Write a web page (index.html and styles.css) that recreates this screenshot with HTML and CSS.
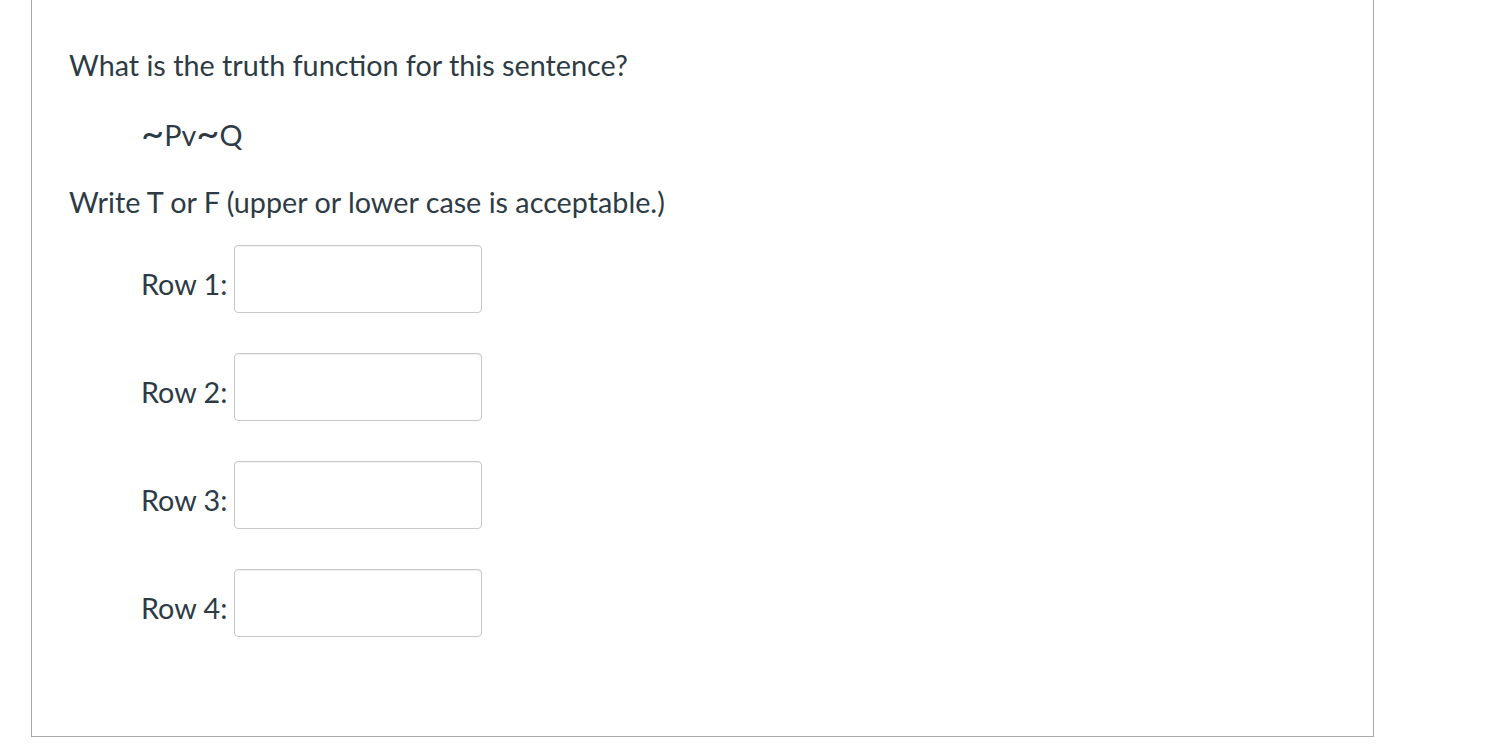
FILE: index.html
```html
<!DOCTYPE html>
<html lang="en">
<head>
<meta charset="utf-8">
<title>Question</title>
<link rel="stylesheet" href="styles.css">
</head>
<body>
<div class="question">
  <p class="prompt">What is the truth function for this sentence?</p>
  <p class="expr"><span class="tilde">~</span>Pv<span class="tilde">~</span>Q</p>
  <p class="prompt instr">Write T or F (upper or lower case is acceptable.)</p>
  <div class="rows">
    <div class="row"><span class="label">Row 1:</span><input class="answer" type="text"></div>
    <div class="row"><span class="label">Row 2:</span><input class="answer" type="text"></div>
    <div class="row"><span class="label">Row 3:</span><input class="answer" type="text"></div>
    <div class="row"><span class="label">Row 4:</span><input class="answer" type="text"></div>
  </div>
</div>
</body>
</html>
```
FILE: styles.css
```css
html, body {
  margin: 0;
  padding: 0;
  background: #ffffff;
}
body {
  font-family: Lato, "Liberation Sans", sans-serif;
  color: #2d3b45;
}
.question {
  margin-left: 31px;
  width: 1343px;
  height: 737px;
  box-sizing: border-box;
  border: 1px solid #a8a8a8;
  border-top: none;
  padding: 45px 0 0 37px;
}
p {
  margin: 0;
  font-size: 28.75px;
  line-height: 40px;
}
.expr {
  margin-top: 30px;
  padding-left: 72px;
}
.tilde {
  font-size: 40px;
  line-height: 0;
  vertical-align: -1px;
}
.instr {
  margin-top: 27px;
}
.rows {
  margin-top: 23px;
  padding-left: 72px;
  display: flex;
  flex-direction: column;
  gap: 40px;
}
.row {
  display: flex;
  align-items: center;
  height: 68px;
}
.label {
  font-size: 28.75px;
  line-height: 40px;
  margin-top: 9px;
  margin-right: 7px;
}
.answer {
  width: 248px;
  height: 68px;
  box-sizing: border-box;
  border: 1px solid #c8c8c8;
  border-radius: 4px;
  box-shadow: inset 0 1px 1px rgba(0, 0, 0, 0.06);
  background: #fff;
  margin: 0;
  padding: 0 10px;
  font-family: inherit;
  font-size: 26px;
}
```
